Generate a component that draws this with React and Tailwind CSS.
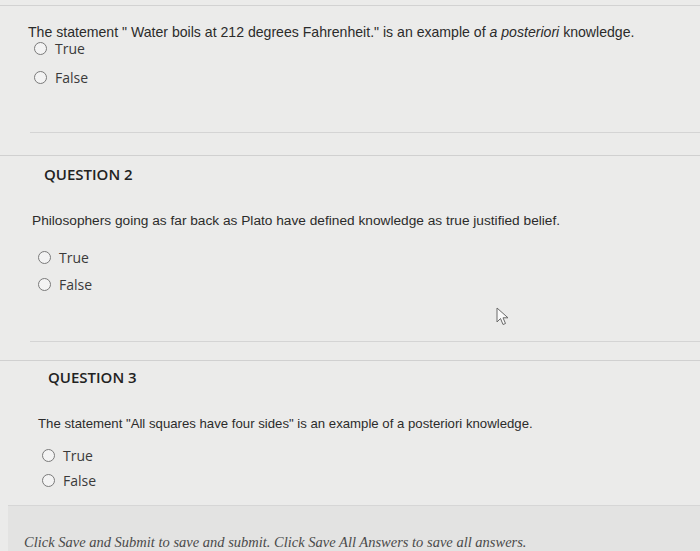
function Radio({ label, className }) {
  return (
    <label className={`flex items-center gap-[8px] ${className}`}>
      <span className="w-[13px] h-[13px] rounded-full border border-[#7a7a7a] bg-[#f3f3f3]" />
      <span className="text-[14px] text-[#3a3a3a] font-['Open_Sans',sans-serif]">{label}</span>
    </label>
  )
}

export default function App() {
  return (
    <div className="w-[700px] h-[551px] overflow-hidden bg-[#ebebea] relative font-['Liberation_Sans',Arial,sans-serif] text-[#2b2b2b]">
      <div className="h-[6px] border-b border-[#d2d2d2]" />

      <div className="pl-[28px] pt-[19px]">
        <p className="text-[14.1px] leading-[15px]">
          The statement " Water boils at 212 degrees Fahrenheit." is an example of <em>a posteriori</em> knowledge.
        </p>
        <Radio label="True" className="ml-[6px] mt-[1px] h-[14px]" />
        <Radio label="False" className="ml-[6px] mt-[12px] h-[20px]" />
      </div>

      <div className="mt-[45px] ml-[30px] border-t border-[#d4d4d4]" />
      <div className="mt-[22px] border-t border-[#d0d0d0]" />

      <div className="pl-[44px] pt-[8px]">
        <h2 className="text-[15px] leading-[20px] font-semibold font-['Open_Sans',sans-serif] text-[#222]">QUESTION 2</h2>
      </div>
      <div className="pl-[32px] pt-[28px]">
        <p className="text-[13.7px] leading-[18px]">
          Philosophers going as far back as Plato have defined knowledge as true justified belief.
        </p>
        <Radio label="True" className="ml-[6px] mt-[17px] h-[20px]" />
        <Radio label="False" className="ml-[6px] mt-[7px] h-[20px]" />
      </div>

      <div className="mt-[47px] ml-[30px] border-t border-[#d4d4d4]" />
      <div className="mt-[18px] border-t border-[#d0d0d0]" />

      <div className="pl-[48px] pt-[6px]">
        <h2 className="text-[15px] leading-[20px] font-semibold font-['Open_Sans',sans-serif] text-[#222]">QUESTION 3</h2>
      </div>
      <div className="pl-[38px] pt-[28px]">
        <p className="text-[13.2px] leading-[18px]">
          The statement "All squares have four sides" is an example of a posteriori knowledge.
        </p>
        <Radio label="True" className="ml-[4px] mt-[12px] h-[20px]" />
        <Radio label="False" className="ml-[4px] mt-[5px] h-[20px]" />
      </div>

      <div className="mt-[15px] ml-[8px] h-[60px] bg-[#e3e3e2] border-t border-[#d6d6d6] pl-[16px] pt-[26px]">
        <p className="text-[14.5px] italic text-[#4a4a4a] font-['Liberation_Serif',serif] whitespace-nowrap">
          Click Save and Submit to save and submit. Click Save All Answers to save all answers.
        </p>
      </div>

      <svg className="absolute left-[496px] top-[307px]" width="14" height="20" viewBox="0 0 14 20">
        <path d="M1 1 L1 15 L4.5 11.5 L7 17.5 L9.5 16.5 L7 10.8 L12 10.8 Z" fill="#fafafa" stroke="#6a6a6a" strokeWidth="1" strokeLinejoin="round" />
      </svg>
    </div>
  )
}
